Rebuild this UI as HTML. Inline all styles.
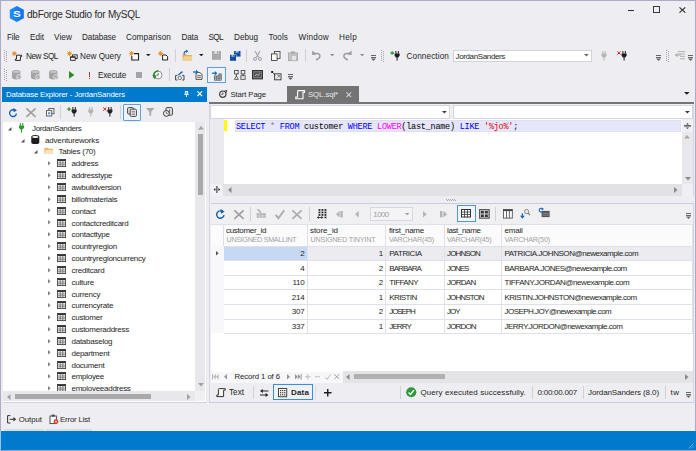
<!DOCTYPE html>
<html><head><meta charset="utf-8"><title>dbForge Studio for MySQL</title>
<style>
html,body{margin:0;padding:0;}
body{width:696px;height:451px;overflow:hidden;background:#eeeef2;font-family:"Liberation Sans",sans-serif;}
#w{position:relative;width:696px;height:451px;overflow:hidden;background:#eeeef2;}
#w div,#w span.t,#w svg{position:absolute;}
span.t{white-space:pre;display:block;}
svg{overflow:visible;}
</style></head><body><div id="w">
<div style="left:0px;top:0px;width:696px;height:1px;background:#ababc8;"></div>
<div style="left:0px;top:0px;width:1px;height:451px;background:#ababc8;"></div>
<div style="left:695px;top:0px;width:1px;height:451px;background:#ababc8;"></div>
<svg style="left:9px;top:5px;" width="15" height="18" viewBox="0 0 15 18"><defs><linearGradient id="lg" x1="0" x2="1" y1="0" y2="0"><stop offset="0" stop-color="#2392f6"/><stop offset="1" stop-color="#0b6df0"/></linearGradient></defs><polygon points="7.8,0.9 14.8,4.8 14.8,13.2 7.8,17.1 0.8,13.2 0.8,4.8" fill="url(#lg)"/><text x="7.8" y="12.4" text-anchor="middle" font-family="Liberation Sans,sans-serif" font-weight="bold" font-size="9.4" fill="#fff" transform="translate(7.8 0) scale(1.25 1) translate(-7.8 0)">S</text></svg>
<span class="t" style="left:27.00px;top:9.10px;font-size:10.0px;line-height:12px;color:#2a2a2a;letter-spacing:-0.248px;">dbForge Studio for MySQL</span>
<div style="left:627.5px;top:9.6px;width:6.5px;height:1.8px;background:#2a2a2a;"></div>
<div style="left:653px;top:6px;width:6.5px;height:6.5px;box-sizing:border-box;border:1px solid #3a3a3a;border-top-width:1.6px;"></div>
<svg style="left:679px;top:6.5px;" width="7" height="6" viewBox="0 0 7 6"><path d="M0.5 0.3 L6.3 5.7 M6.3 0.3 L0.5 5.7" stroke="#2a2a2a" stroke-width="1.1" fill="none"/></svg>
<span class="t" style="left:7.00px;top:32.00px;font-size:8.2px;line-height:12px;color:#1e1e1e;letter-spacing:-0.178px;">File</span>
<span class="t" style="left:30.00px;top:32.00px;font-size:8.2px;line-height:12px;color:#1e1e1e;letter-spacing:-0.032px;">Edit</span>
<span class="t" style="left:54.00px;top:32.00px;font-size:8.2px;line-height:12px;color:#1e1e1e;letter-spacing:0.094px;">View</span>
<span class="t" style="left:82.00px;top:32.00px;font-size:8.2px;line-height:12px;color:#1e1e1e;letter-spacing:-0.138px;">Database</span>
<span class="t" style="left:126.00px;top:32.00px;font-size:8.2px;line-height:12px;color:#1e1e1e;letter-spacing:0.079px;">Comparison</span>
<span class="t" style="left:181.50px;top:32.00px;font-size:8.2px;line-height:12px;color:#1e1e1e;letter-spacing:-0.205px;">Data</span>
<span class="t" style="left:208.50px;top:32.00px;font-size:8.2px;line-height:12px;color:#1e1e1e;letter-spacing:-0.636px;">SQL</span>
<span class="t" style="left:234.00px;top:32.00px;font-size:8.2px;line-height:12px;color:#1e1e1e;letter-spacing:-0.033px;">Debug</span>
<span class="t" style="left:268.50px;top:32.00px;font-size:8.2px;line-height:12px;color:#1e1e1e;letter-spacing:0.071px;">Tools</span>
<span class="t" style="left:298.50px;top:32.00px;font-size:8.2px;line-height:12px;color:#1e1e1e;letter-spacing:0.223px;">Window</span>
<span class="t" style="left:339.00px;top:32.00px;font-size:8.2px;line-height:12px;color:#1e1e1e;letter-spacing:0.284px;">Help</span>
<svg style="left:4px;top:49.5px;" width="4" height="12" viewBox="0 0 4 12"><rect x="0" y="0" width="1" height="1" fill="#a4a4ae"/><rect x="2" y="1" width="1" height="1" fill="#a4a4ae"/><rect x="0" y="2" width="1" height="1" fill="#a4a4ae"/><rect x="2" y="3" width="1" height="1" fill="#a4a4ae"/><rect x="0" y="4" width="1" height="1" fill="#a4a4ae"/><rect x="2" y="5" width="1" height="1" fill="#a4a4ae"/><rect x="0" y="6" width="1" height="1" fill="#a4a4ae"/><rect x="2" y="7" width="1" height="1" fill="#a4a4ae"/><rect x="0" y="8" width="1" height="1" fill="#a4a4ae"/><rect x="2" y="9" width="1" height="1" fill="#a4a4ae"/><rect x="0" y="10" width="1" height="1" fill="#a4a4ae"/><rect x="2" y="11" width="1" height="1" fill="#a4a4ae"/></svg>
<svg style="left:380.5px;top:49.5px;" width="4" height="12" viewBox="0 0 4 12"><rect x="0" y="0" width="1" height="1" fill="#a4a4ae"/><rect x="2" y="1" width="1" height="1" fill="#a4a4ae"/><rect x="0" y="2" width="1" height="1" fill="#a4a4ae"/><rect x="2" y="3" width="1" height="1" fill="#a4a4ae"/><rect x="0" y="4" width="1" height="1" fill="#a4a4ae"/><rect x="2" y="5" width="1" height="1" fill="#a4a4ae"/><rect x="0" y="6" width="1" height="1" fill="#a4a4ae"/><rect x="2" y="7" width="1" height="1" fill="#a4a4ae"/><rect x="0" y="8" width="1" height="1" fill="#a4a4ae"/><rect x="2" y="9" width="1" height="1" fill="#a4a4ae"/><rect x="0" y="10" width="1" height="1" fill="#a4a4ae"/><rect x="2" y="11" width="1" height="1" fill="#a4a4ae"/></svg>
<svg style="left:665.5px;top:49.5px;" width="4" height="12" viewBox="0 0 4 12"><rect x="0" y="0" width="1" height="1" fill="#a4a4ae"/><rect x="2" y="1" width="1" height="1" fill="#a4a4ae"/><rect x="0" y="2" width="1" height="1" fill="#a4a4ae"/><rect x="2" y="3" width="1" height="1" fill="#a4a4ae"/><rect x="0" y="4" width="1" height="1" fill="#a4a4ae"/><rect x="2" y="5" width="1" height="1" fill="#a4a4ae"/><rect x="0" y="6" width="1" height="1" fill="#a4a4ae"/><rect x="2" y="7" width="1" height="1" fill="#a4a4ae"/><rect x="0" y="8" width="1" height="1" fill="#a4a4ae"/><rect x="2" y="9" width="1" height="1" fill="#a4a4ae"/><rect x="0" y="10" width="1" height="1" fill="#a4a4ae"/><rect x="2" y="11" width="1" height="1" fill="#a4a4ae"/></svg>
<span class="t" style="left:26.00px;top:50.70px;font-size:8.2px;line-height:12px;color:#1e1e1e;letter-spacing:-0.441px;">New SQL</span>
<span class="t" style="left:80.00px;top:50.70px;font-size:8.2px;line-height:12px;color:#1e1e1e;">New Query</span>
<span class="t" style="left:406.50px;top:50.70px;font-size:8.2px;line-height:12px;color:#1e1e1e;letter-spacing:0.102px;">Connection</span>
<div style="left:453px;top:49.5px;width:139px;height:12.5px;background:#fff;box-sizing:border-box;border:1px solid #d0d2dc;"></div>
<span class="t" style="left:455.50px;top:50.50px;font-size:8.0px;line-height:12px;color:#1e1e1e;letter-spacing:-0.366px;">JordanSanders</span>
<svg style="left:583.6px;top:54.099999999999994px;" width="4.8" height="2.9" viewBox="0 0 4.8 2.9"><polygon points="0,0 4.8,0 2.4,2.4" fill="#6a6a6a"/></svg>
<svg style="left:146.39999999999998px;top:54.45px;" width="4.6" height="2.8" viewBox="0 0 4.6 2.8"><polygon points="0,0 4.6,0 2.3,2.3" fill="#1e1e1e"/></svg>
<svg style="left:199.39999999999998px;top:54.45px;" width="4.6" height="2.8" viewBox="0 0 4.6 2.8"><polygon points="0,0 4.6,0 2.3,2.3" fill="#1e1e1e"/></svg>
<svg style="left:329.5px;top:54.3px;" width="4.4" height="2.7" viewBox="0 0 4.4 2.7"><polygon points="0,0 4.4,0 2.2,2.2" fill="#8a8a8a"/></svg>
<svg style="left:359.5px;top:54.3px;" width="4.4" height="2.7" viewBox="0 0 4.4 2.7"><polygon points="0,0 4.4,0 2.2,2.2" fill="#8a8a8a"/></svg>
<svg style="left:370.5px;top:55px;" width="5" height="6" viewBox="0 0 5 6"><rect x="0" y="0" width="5" height="1" fill="#666"/><rect x="0" y="2" width="5" height="1" fill="#666"/><polygon points="0,3.5 5,3.5 2.5,6" fill="#666"/></svg>
<svg style="left:656.0px;top:55px;" width="5" height="6" viewBox="0 0 5 6"><rect x="0" y="0" width="5" height="1" fill="#666"/><rect x="0" y="2" width="5" height="1" fill="#666"/><polygon points="0,3.5 5,3.5 2.5,6" fill="#666"/></svg>
<svg style="left:687.5px;top:55px;" width="5" height="6" viewBox="0 0 5 6"><rect x="0" y="0" width="5" height="1" fill="#666"/><rect x="0" y="2" width="5" height="1" fill="#666"/><polygon points="0,3.5 5,3.5 2.5,6" fill="#666"/></svg>
<div style="left:175px;top:49px;width:1px;height:13px;background:#cfd0da;"></div>
<div style="left:246px;top:49px;width:1px;height:13px;background:#cfd0da;"></div>
<div style="left:305px;top:49px;width:1px;height:13px;background:#cfd0da;"></div>
<svg style="left:4px;top:68.5px;" width="4" height="12" viewBox="0 0 4 12"><rect x="0" y="0" width="1" height="1" fill="#a4a4ae"/><rect x="2" y="1" width="1" height="1" fill="#a4a4ae"/><rect x="0" y="2" width="1" height="1" fill="#a4a4ae"/><rect x="2" y="3" width="1" height="1" fill="#a4a4ae"/><rect x="0" y="4" width="1" height="1" fill="#a4a4ae"/><rect x="2" y="5" width="1" height="1" fill="#a4a4ae"/><rect x="0" y="6" width="1" height="1" fill="#a4a4ae"/><rect x="2" y="7" width="1" height="1" fill="#a4a4ae"/><rect x="0" y="8" width="1" height="1" fill="#a4a4ae"/><rect x="2" y="9" width="1" height="1" fill="#a4a4ae"/><rect x="0" y="10" width="1" height="1" fill="#a4a4ae"/><rect x="2" y="11" width="1" height="1" fill="#a4a4ae"/></svg>
<span class="t" style="left:98.00px;top:69.70px;font-size:8.2px;line-height:12px;color:#1e1e1e;letter-spacing:-0.233px;">Execute</span>
<div style="left:169px;top:68px;width:1px;height:13px;background:#cfd0da;"></div>
<svg style="left:287.5px;top:74px;" width="5" height="6" viewBox="0 0 5 6"><rect x="0" y="0" width="5" height="1" fill="#666"/><rect x="0" y="2" width="5" height="1" fill="#666"/><polygon points="0,3.5 5,3.5 2.5,6" fill="#666"/></svg>
<div style="left:207px;top:66.7px;width:18.5px;height:16.3px;background:#edf2f9;box-sizing:border-box;border:1px solid #5c9fe0;"></div>
<svg style="left:12px;top:50.5px;" width="11" height="11" viewBox="0 0 11 11"><path d="M2.3 0.10000000000000009 V5.1 M-0.20000000000000018 2.6 H4.8 M0.4999999999999998 0.8 L4.1 4.4 M4.1 0.8 L0.4999999999999998 4.4" stroke="#e8962e" stroke-width="1"/><circle cx="2.3" cy="2.6" r="1.5" fill="#e8962e"/><path d="M4.6 4.2 H9.6 V5.6 H8.4 V9.4 H3.4 V8 H4.6 Z" fill="#fff" stroke="#222" stroke-width="1"/></svg>
<svg style="left:66.5px;top:50.5px;" width="11" height="11" viewBox="0 0 11 11"><path d="M2.5 0.10000000000000009 V5.1 M0.0 2.6 H5.0 M0.7 0.8 L4.3 4.4 M4.3 0.8 L0.7 4.4" stroke="#e8962e" stroke-width="1"/><circle cx="2.5" cy="2.6" r="1.5" fill="#e8962e"/><rect x="5.6" y="3.9" width="4.6" height="3.6" fill="#f4f4f4" stroke="#222" stroke-width="0.9"/><rect x="3.6" y="5.9" width="4.6" height="3.4" fill="#f4f4f4" stroke="#222" stroke-width="0.9"/><rect x="3.6" y="5.6" width="4.6" height="1" fill="#222"/></svg>
<svg style="left:128.5px;top:50.5px;" width="11" height="11" viewBox="0 0 11 11"><path d="M2.5 0.10000000000000009 V5.1 M0.0 2.6 H5.0 M0.7 0.8 L4.3 4.4 M4.3 0.8 L0.7 4.4" stroke="#e8962e" stroke-width="1"/><circle cx="2.5" cy="2.6" r="1.5" fill="#e8962e"/><path d="M5 2.6 H9.5 V9 H2.8 V5" fill="#fff" stroke="#222" stroke-width="1.1"/></svg>
<svg style="left:158px;top:50.5px;" width="11" height="11" viewBox="0 0 11 11"><path d="M2.7 0.10000000000000009 V5.1 M0.20000000000000018 2.6 H5.2 M0.9000000000000001 0.8 L4.5 4.4 M4.5 0.8 L0.9000000000000001 4.4" stroke="#e8962e" stroke-width="1"/><circle cx="2.7" cy="2.6" r="1.5" fill="#e8962e"/><path d="M4.6 4 H8 L9.6 5.6 V9 H4.6 Z" fill="#fff" stroke="#222" stroke-width="1"/></svg>
<svg style="left:181.5px;top:50px;" width="11" height="11" viewBox="0 0 11 11"><path d="M0.5 4 H4.2 L5 5 H10 V10.4 H0.5 Z" fill="#e2b565"/><path d="M2 6.2 H10.6 L9.4 10.4 H0.6 Z" fill="#f2d191"/><path d="M2.2 4.4 V2.6 a1.6 1.6 0 0 1 1.6 -1.3 H4.6" fill="none" stroke="#1767c0" stroke-width="1.2"/><polygon points="4.2,-0.4 6.4,1.3 4.2,3" fill="#1767c0"/></svg>
<svg style="left:212px;top:51px;" width="9" height="9" viewBox="0 0 9 9"><rect x="0" y="0" width="9" height="8.8" fill="#a9a9a9"/><rect x="2.25" y="0" width="4.5" height="2.9040000000000004" fill="#eeeef2" opacity="0.75"/><rect x="4.95" y="0.3" width="1.2600000000000002" height="2.2" fill="#a9a9a9"/></svg>
<svg style="left:229.5px;top:50.7px;" width="11" height="10" viewBox="0 0 11 10"><rect x="4" y="0" width="6.5" height="5.6" fill="#0f4ea0"/><rect x="5.625" y="0" width="3.25" height="1.8479999999999999" fill="#eeeef2" opacity="0.75"/><rect x="7.575" y="0.3" width="0.9100000000000001" height="1.4" fill="#0f4ea0"/><rect x="-0.4" y="3.4" width="6.8" height="6.8" fill="#eeeef2"/><rect x="0" y="3.8" width="6" height="6" fill="#0f4ea0"/><rect x="1.5" y="3.8" width="3.0" height="1.98" fill="#eeeef2" opacity="0.75"/><rect x="3.3000000000000003" y="4.1" width="0.8400000000000001" height="1.5" fill="#0f4ea0"/></svg>
<svg style="left:253px;top:50.7px;" width="9" height="10" viewBox="0 0 9 10"><path d="M2 0 L5.8 6.6 M7 0 L3.2 6.6" stroke="#a4a4a4" stroke-width="1.1" fill="none"/><circle cx="2" cy="8" r="1.5" fill="none" stroke="#a4a4a4" stroke-width="1"/><circle cx="7" cy="8" r="1.5" fill="none" stroke="#a4a4a4" stroke-width="1"/></svg>
<svg style="left:270.8px;top:50.7px;" width="10" height="10" viewBox="0 0 10 10"><rect x="3.4" y="0.5" width="5.6" height="7" fill="#fafafa" stroke="#444" stroke-width="0.9"/><rect x="0.5" y="2.9" width="5.6" height="6.6" fill="#fafafa" stroke="#444" stroke-width="0.9"/></svg>
<svg style="left:288px;top:50.7px;" width="10" height="10" viewBox="0 0 10 10"><rect x="0.6" y="2" width="8.8" height="7.6" fill="#c6c6c6" stroke="#a9a9a9" stroke-width="1"/><rect x="3" y="0.4" width="4" height="2.4" fill="#a9a9a9"/><rect x="3.4" y="4.4" width="5" height="5.2" fill="#e4e4e6" stroke="#b4b4b4" stroke-width="0.7"/></svg>
<svg style="left:312px;top:50.4px;" width="10" height="10" viewBox="0 0 10 10"><path d="M1.4 3.6 H5.4 a2.6 2.6 0 0 1 1.6 4.6 L4 10" fill="none" stroke="#9c9c9c" stroke-width="1.5"/><polygon points="0.2,0.4 0.2,5 4.6,4.6" fill="#9c9c9c"/></svg>
<svg style="left:342px;top:50.4px;" width="10" height="10" viewBox="0 0 10 10"><path d="M8.4 3.6 H4.4 a2.6 2.6 0 0 0 -1.6 4.6 L5.8 10" fill="none" stroke="#9c9c9c" stroke-width="1.5"/><polygon points="9.6,0.4 9.6,5 5.2,4.6" fill="#9c9c9c"/></svg>
<svg style="left:389.5px;top:51px;" width="11" height="10" viewBox="0 0 11 10"><path d="M2.2 0.2 V3.8000000000000003 M0.4 2.0 H4.0" stroke="#2e9a2e" stroke-width="1.3"/><rect x="5.3999999999999995" y="0" width="1" height="2.8" fill="#1e1e1e"/><rect x="7.8" y="0" width="1" height="2.8" fill="#1e1e1e"/><path d="M4.6 2.6 H9.6 V4.8 L8.2 6.4 H6.0 L4.6 4.8 Z" fill="#1e1e1e"/><rect x="6.6" y="6" width="1" height="3.6" fill="#1e1e1e"/></svg>
<svg style="left:601px;top:50.5px;" width="7" height="10" viewBox="0 0 7 10"><rect x="1.3" y="0" width="1" height="2.8" fill="#b4b4b4"/><rect x="3.7" y="0" width="1" height="2.8" fill="#b4b4b4"/><path d="M0.5 2.6 H5.5 V4.8 L4.1 6.4 H1.9 L0.5 4.8 Z" fill="#b4b4b4"/><rect x="2.5" y="6" width="1" height="3.6" fill="#b4b4b4"/></svg>
<svg style="left:616.5px;top:50.5px;" width="11" height="10" viewBox="0 0 11 10"><path d="M0.3 0.4 L3.5 3.6 M3.5 0.4 L0.3 3.6" stroke="#d02020" stroke-width="1.0"/><rect x="5.3999999999999995" y="0" width="1" height="2.8" fill="#1e1e1e"/><rect x="7.8" y="0" width="1" height="2.8" fill="#1e1e1e"/><path d="M4.6 2.6 H9.6 V4.8 L8.2 6.4 H6.0 L4.6 4.8 Z" fill="#1e1e1e"/><rect x="6.6" y="6" width="1" height="3.6" fill="#1e1e1e"/></svg>
<svg style="left:675px;top:50.8px;" width="10" height="9" viewBox="0 0 10 9"><path d="M3 0.6 H10 M3 3 H10 M5 5.4 H10 M5 7.8 H10" stroke="#b0b0b0" stroke-width="1"/><path d="M0.3 4 H6" stroke="#b0b0b0" stroke-width="1"/><polygon points="0,4 2.6,1.8 2.6,6.2" fill="#b0b0b0"/></svg>
<svg style="left:12px;top:70.3px;" width="10" height="10" viewBox="0 0 10 10"><path d="M0 1.8 a4.2 1.8 0 0 1 8.4 0 V7.6 a4.2 1.8 0 0 1 -8.4 0 Z" fill="#a4a4a4"/><ellipse cx="4.2" cy="1.9" rx="3.4" ry="1.1" fill="#c4c4c4"/><circle cx="7" cy="7" r="2.4" fill="#a4a4a4" stroke="#eeeef2" stroke-width="0.8"/><path d="M5.9 7 L6.8 7.9 L8.2 6.2" stroke="#e6e6e6" stroke-width="0.7" fill="none"/></svg>
<svg style="left:30.5px;top:70.3px;" width="10" height="10" viewBox="0 0 10 10"><path d="M0 1.8 a4.2 1.8 0 0 1 8.4 0 V7.6 a4.2 1.8 0 0 1 -8.4 0 Z" fill="#a4a4a4"/><ellipse cx="4.2" cy="1.9" rx="3.4" ry="1.1" fill="#c4c4c4"/><circle cx="7" cy="7" r="2.4" fill="#a4a4a4" stroke="#eeeef2" stroke-width="0.8"/><path d="M5.9 7 L6.8 7.9 L8.2 6.2" stroke="#e6e6e6" stroke-width="0.7" fill="none"/></svg>
<svg style="left:48.5px;top:70.3px;" width="10" height="10" viewBox="0 0 10 10"><path d="M0 1.8 a4.2 1.8 0 0 1 8.4 0 V7.6 a4.2 1.8 0 0 1 -8.4 0 Z" fill="#a4a4a4"/><ellipse cx="4.2" cy="1.9" rx="3.4" ry="1.1" fill="#c4c4c4"/><circle cx="7" cy="7" r="2.4" fill="#a4a4a4" stroke="#eeeef2" stroke-width="0.8"/><path d="M5.9 7 L6.8 7.9 L8.2 6.2" stroke="#e6e6e6" stroke-width="0.7" fill="none"/></svg>
<svg style="left:69px;top:71.3px;" width="5.5" height="8" viewBox="0 0 5.5 8"><polygon points="0,0 5.4,3.9 0,7.8" fill="#2b8a2b"/></svg>
<div style="left:88.5px;top:71.6px;width:1.6px;height:5px;background:#c0392b;"></div>
<div style="left:88.5px;top:77.5px;width:1.6px;height:1.5px;background:#c0392b;"></div>
<div style="left:136px;top:72.3px;width:6px;height:6px;background:#a4a4a4;"></div>
<svg style="left:151.5px;top:70.3px;" width="11" height="10" viewBox="0 0 11 10"><circle cx="6" cy="5" r="4" fill="#f6f6f6" stroke="#8a8a8a" stroke-width="0.9"/><path d="M6.4 1 A4 4 0 0 0 3 7.8" fill="none" stroke="#2b8a2b" stroke-width="1.5"/><polygon points="0.2,5.2 4.6,5.6 2.6,9.2" fill="#2b8a2b"/><path d="M6.2 2.8 V5.2 H4.4" stroke="#555" stroke-width="0.8" fill="none"/></svg>
<svg style="left:175px;top:70.5px;" width="10" height="10" viewBox="0 0 10 10"><path d="M2.4 4.4 H0.6 V9 H2.4 M7.2 4.4 H9 V9 H7.2" fill="none" stroke="#444" stroke-width="1"/><circle cx="4.8" cy="6.9" r="1.7" fill="none" stroke="#555" stroke-width="0.8"/><path d="M3.4 4 L7.4 0.6" stroke="#1767c0" stroke-width="1.4"/></svg>
<svg style="left:192.8px;top:70.3px;" width="10" height="10" viewBox="0 0 10 10"><path d="M3 2.6 H7 L9 4.4 V9.4 H3 Z" fill="#f4f4f4" stroke="#444" stroke-width="0.9"/><path d="M4.2 5.6 H7.8 M4.2 7.4 H7.8" stroke="#444" stroke-width="0.8"/><path d="M0 2 H3.6" stroke="#1767c0" stroke-width="1.3"/><polygon points="3,-0.2 5.6,2 3,4.2" fill="#1767c0"/></svg>
<svg style="left:211.8px;top:70.6px;" width="10" height="10" viewBox="0 0 10 10"><path d="M2.6 4.8 V9.2 M4.8 4.8 V9.2 M7 2.8 V9.2 M9.2 2.8 V9.2 M2.2 5 H9.4 M2.2 7.1 H9.4 M2.2 9.2 H9.4 M6.8 3 H9.4" stroke="#4a4a4a" stroke-width="0.8" fill="none"/><path d="M0 2.2 H3.4" stroke="#1767c0" stroke-width="1.3"/><polygon points="2.8,0 5.4,2.2 2.8,4.4" fill="#1767c0"/></svg>
<svg style="left:233.5px;top:70.3px;" width="12" height="10" viewBox="0 0 12 10"><rect x="0.6" y="0.5" width="3.6" height="3.4" fill="#f4f4f4" stroke="#444" stroke-width="0.9"/><rect x="7.2" y="0.5" width="3.6" height="3.4" fill="#f4f4f4" stroke="#444" stroke-width="0.9"/><path d="M2.4 4 V6 M9 4 V6" stroke="#444" stroke-width="0.9"/><polygon points="0.4,9.4 2.4,6 4.4,9.4" fill="#f4f4f4" stroke="#444" stroke-width="0.8"/><rect x="6.8" y="5.6" width="4.4" height="3.9" fill="#d8d8d8" stroke="#555" stroke-width="0.8"/></svg>
<svg style="left:252px;top:70.4px;" width="11" height="10" viewBox="0 0 11 10"><rect x="0.6" y="0.6" width="9.8" height="8.2" fill="#888" stroke="#333" stroke-width="1.2"/><rect x="2" y="2.2" width="7" height="5" fill="#555"/><path d="M3 6 L4.6 4.2 L6 5.6 L7.6 3.4" stroke="#e8e8e8" stroke-width="0.7" fill="none"/></svg>
<svg style="left:270.5px;top:71px;" width="11" height="10" viewBox="0 0 11 10"><rect x="3.6" y="2.8" width="6.4" height="6" fill="#f0f0f0" stroke="#444" stroke-width="1"/><rect x="0.2" y="0" width="2" height="2" fill="#222"/><path d="M1.6 1.6 L4.4 4.2" stroke="#222" stroke-width="0.7"/><path d="M5.4 7.4 L8.4 4.4 M6.4 4.4 H8.4 V6.4" stroke="#666" stroke-width="0.7" fill="none"/></svg>
<div style="left:2px;top:86.5px;width:205px;height:316px;background:#eaeaee;"></div>
<div style="left:2px;top:86.7px;width:204.7px;height:15px;background:#007acc;"></div>
<span class="t" style="left:6.00px;top:88.90px;font-size:7.8px;line-height:12px;color:#fff;letter-spacing:-0.165px;">Database Explorer - JordanSanders</span>
<svg style="left:184px;top:91px;" width="5" height="6" viewBox="0 0 5 6"><path d="M1 0.5 H4 M1.3 0.5 V3.2 M3.7 0.5 V3.2 M3 0.5 V3.2 M0.3 3.4 H4.7 M2.5 3.5 V6" stroke="#fff" stroke-width="0.9" fill="none"/></svg>
<svg style="left:197px;top:91px;" width="5.5" height="5.5" viewBox="0 0 5.5 5.5"><path d="M0.4 0.4 L5.1 5.1 M5.1 0.4 L0.4 5.1" stroke="#fff" stroke-width="1.2" fill="none"/></svg>
<div style="left:2.5px;top:101.7px;width:204.2px;height:20.3px;background:#eeeef2;"></div>
<div style="left:60px;top:105px;width:1px;height:14px;background:#cfd0da;"></div>
<div style="left:119.5px;top:105px;width:1px;height:14px;background:#cfd0da;"></div>
<div style="left:122.5px;top:103.5px;width:18.5px;height:17px;background:#edf2f9;box-sizing:border-box;border:1px solid #5c9fe0;border-radius:1px;"></div>
<svg style="left:9.2px;top:108px;" width="9" height="10" viewBox="0 0 9 10"><g transform="translate(0 0) scale(1.0)"><path d="M6.6 2.9 A3.4 3.4 0 1 0 7.4 5.6" fill="none" stroke="#1560b0" stroke-width="1.35"/><polygon points="4.3,0 8,2.2 4.6,4.3" fill="#1560b0"/></g></svg>
<svg style="left:26.3px;top:108.2px;" width="10" height="9" viewBox="0 0 10 9"><path d="M0.4 0.4 L9.6 8.8 M9.6 0.4 L0.4 8.8" stroke="#a0a0a0" stroke-width="1.7" fill="none"/></svg>
<svg style="left:45.8px;top:107.8px;" width="9" height="9" viewBox="0 0 9 9"><rect x="2.8" y="0.5" width="5.2" height="5.2" fill="#eeeef2" stroke="#555" stroke-width="0.9"/><rect x="0.5" y="2.6" width="5.2" height="5.4" fill="#fafafa" stroke="#555" stroke-width="0.9"/><rect x="2" y="4.2" width="2.2" height="2.2" fill="#5b9bd5"/></svg>
<svg style="left:67px;top:107.3px;" width="11" height="10" viewBox="0 0 11 10"><path d="M2.0 0.3 V3.9 M0.2 2.1 H3.8000000000000003" stroke="#2e9a2e" stroke-width="1.3"/><rect x="5.3999999999999995" y="0" width="1" height="2.8" fill="#1e1e1e"/><rect x="7.8" y="0" width="1" height="2.8" fill="#1e1e1e"/><path d="M4.6 2.6 H9.6 V4.8 L8.2 6.4 H6.0 L4.6 4.8 Z" fill="#1e1e1e"/><rect x="6.6" y="6" width="1" height="3.6" fill="#1e1e1e"/></svg>
<svg style="left:87.5px;top:107.2px;" width="7" height="10" viewBox="0 0 7 10"><rect x="1.1" y="0" width="1" height="2.8" fill="#b4b4b4"/><rect x="3.5" y="0" width="1" height="2.8" fill="#b4b4b4"/><path d="M0.3 2.6 H5.3 V4.8 L3.9 6.4 H1.7 L0.3 4.8 Z" fill="#b4b4b4"/><rect x="2.3" y="6" width="1" height="3.6" fill="#b4b4b4"/></svg>
<svg style="left:103.3px;top:107.2px;" width="11" height="10" viewBox="0 0 11 10"><path d="M0.2 0.5 L3.4000000000000004 3.7 M3.4000000000000004 0.5 L0.2 3.7" stroke="#d02020" stroke-width="1.0"/><rect x="5.2" y="0" width="1" height="2.8" fill="#1e1e1e"/><rect x="7.6000000000000005" y="0" width="1" height="2.8" fill="#1e1e1e"/><path d="M4.4 2.6 H9.4 V4.8 L8.0 6.4 H5.800000000000001 L4.4 4.8 Z" fill="#1e1e1e"/><rect x="6.4" y="6" width="1" height="3.6" fill="#1e1e1e"/></svg>
<svg style="left:126.5px;top:107px;" width="11" height="10" viewBox="0 0 11 10"><rect x="0.6" y="0.6" width="6" height="6.4" rx="1" fill="#e0e0e0" stroke="#444" stroke-width="1"/><rect x="3.2" y="2.2" width="6.2" height="7.2" rx="1" fill="#f4f4f4" stroke="#444" stroke-width="1"/><path d="M4.6 4.4 H8 M4.6 6 H8 M4.6 7.6 H8" stroke="#555" stroke-width="0.7"/></svg>
<svg style="left:145.5px;top:108.2px;" width="9" height="8" viewBox="0 0 9 8"><polygon points="0,0 8.6,0 5.2,3.8 5.2,7.8 3.4,7.8 3.4,3.8" fill="#a9a9a9"/></svg>
<svg style="left:163px;top:107.2px;" width="11" height="10" viewBox="0 0 11 10"><rect x="3" y="0.6" width="6.4" height="7.6" rx="1" fill="#e8e8e8" stroke="#444" stroke-width="1"/><path d="M6.6 2.4 V6.6" stroke="#444" stroke-width="0.8"/><circle cx="3.4" cy="6.4" r="2.9" fill="#f4f4f4" stroke="#333" stroke-width="1"/><path d="M3.4 4.8 V6.6 H4.8" stroke="#333" stroke-width="0.7" fill="none"/></svg>
<div style="left:2.5px;top:122px;width:203px;height:280.5px;background:#fff;"></div>
<div style="left:195px;top:122px;width:10.3px;height:269px;background:#e8e8ec;"></div>
<div style="left:197.5px;top:133.5px;width:5.5px;height:61.5px;background:#a9a9a9;"></div>
<svg style="left:197.5px;top:125.5px;" width="6" height="3.5" viewBox="0 0 6 3.5"><polygon points="0,3.5 6,3.5 3,0" fill="#a0a0a0"/></svg>
<svg style="left:197.5px;top:383px;" width="6" height="3.5" viewBox="0 0 6 3.5"><polygon points="0,0 6,0 3,3.5" fill="#a0a0a0"/></svg>
<div style="left:2.5px;top:391.3px;width:192.5px;height:10.2px;background:#e8e8ec;"></div>
<div style="left:195px;top:391.3px;width:10.3px;height:10.2px;background:#f0f0f3;"></div>
<div style="left:15px;top:394px;width:136px;height:5px;background:#a9a9a9;"></div>
<svg style="left:6.5px;top:393.5px;" width="3.5" height="6" viewBox="0 0 3.5 6"><polygon points="3.5,0 3.5,6 0,3" fill="#a0a0a0"/></svg>
<svg style="left:186.5px;top:393.5px;" width="3.5" height="6" viewBox="0 0 3.5 6"><polygon points="0,0 0,6 3.5,3" fill="#a0a0a0"/></svg>
<div style="left:2.5px;top:122px;width:192.5px;height:269.3px;overflow:hidden;"><div style="left:-2.5px;top:-122px;width:200px;height:400px;">
<svg style="left:7.7px;top:126.70000000000002px;" width="3.5" height="3.5" viewBox="0 0 3.5 3.5"><polygon points="3.5,0 3.5,3.5 0,3.5" fill="#505050"/></svg>
<span class="t" style="left:32.00px;top:122.80px;font-size:8.0px;line-height:12px;color:#1e1e1e;letter-spacing:-0.366px;">JordanSanders</span>
<svg style="left:20.7px;top:138.54px;" width="3.5" height="3.5" viewBox="0 0 3.5 3.5"><polygon points="3.5,0 3.5,3.5 0,3.5" fill="#505050"/></svg>
<span class="t" style="left:45.00px;top:134.64px;font-size:8.0px;line-height:12px;color:#1e1e1e;letter-spacing:-0.177px;">adventureworks</span>
<svg style="left:33.7px;top:150.38px;" width="3.5" height="3.5" viewBox="0 0 3.5 3.5"><polygon points="3.5,0 3.5,3.5 0,3.5" fill="#505050"/></svg>
<span class="t" style="left:58.50px;top:146.48px;font-size:8.0px;line-height:12px;color:#1e1e1e;letter-spacing:-0.234px;">Tables (70)</span>
<svg style="left:47.5px;top:161.01999999999998px;" width="2.7" height="4.6" viewBox="0 0 2.7 4.6"><polygon points="0,0 2.7,2.3 0,4.6" fill="#858585"/></svg>
<svg style="left:57.3px;top:159.32px;" width="9" height="8" viewBox="0 0 9 8"><rect x="0.4" y="0.4" width="8.2" height="7.2" fill="#fff" stroke="#333" stroke-width="0.8"/><rect x="0.4" y="0.4" width="8.2" height="1.7" fill="#333"/><path d="M0.5 4 H8.5 M0.5 5.8 H8.5 M3.2 2 V7.5 M5.8 2 V7.5" stroke="#4a4a4a" stroke-width="0.65" fill="none"/></svg>
<span class="t" style="left:71.50px;top:158.32px;font-size:8.0px;line-height:12px;color:#1e1e1e;letter-spacing:-0.261px;">address</span>
<svg style="left:47.5px;top:172.85999999999999px;" width="2.7" height="4.6" viewBox="0 0 2.7 4.6"><polygon points="0,0 2.7,2.3 0,4.6" fill="#858585"/></svg>
<svg style="left:57.3px;top:171.16px;" width="9" height="8" viewBox="0 0 9 8"><rect x="0.4" y="0.4" width="8.2" height="7.2" fill="#fff" stroke="#333" stroke-width="0.8"/><rect x="0.4" y="0.4" width="8.2" height="1.7" fill="#333"/><path d="M0.5 4 H8.5 M0.5 5.8 H8.5 M3.2 2 V7.5 M5.8 2 V7.5" stroke="#4a4a4a" stroke-width="0.65" fill="none"/></svg>
<span class="t" style="left:71.50px;top:170.16px;font-size:8.0px;line-height:12px;color:#1e1e1e;letter-spacing:-0.255px;">addresstype</span>
<svg style="left:47.5px;top:184.7px;" width="2.7" height="4.6" viewBox="0 0 2.7 4.6"><polygon points="0,0 2.7,2.3 0,4.6" fill="#858585"/></svg>
<svg style="left:57.3px;top:183.0px;" width="9" height="8" viewBox="0 0 9 8"><rect x="0.4" y="0.4" width="8.2" height="7.2" fill="#fff" stroke="#333" stroke-width="0.8"/><rect x="0.4" y="0.4" width="8.2" height="1.7" fill="#333"/><path d="M0.5 4 H8.5 M0.5 5.8 H8.5 M3.2 2 V7.5 M5.8 2 V7.5" stroke="#4a4a4a" stroke-width="0.65" fill="none"/></svg>
<span class="t" style="left:71.50px;top:182.00px;font-size:8.0px;line-height:12px;color:#1e1e1e;letter-spacing:-0.243px;">awbuildversion</span>
<svg style="left:47.5px;top:196.53999999999996px;" width="2.7" height="4.6" viewBox="0 0 2.7 4.6"><polygon points="0,0 2.7,2.3 0,4.6" fill="#858585"/></svg>
<svg style="left:57.3px;top:194.83999999999997px;" width="9" height="8" viewBox="0 0 9 8"><rect x="0.4" y="0.4" width="8.2" height="7.2" fill="#fff" stroke="#333" stroke-width="0.8"/><rect x="0.4" y="0.4" width="8.2" height="1.7" fill="#333"/><path d="M0.5 4 H8.5 M0.5 5.8 H8.5 M3.2 2 V7.5 M5.8 2 V7.5" stroke="#4a4a4a" stroke-width="0.65" fill="none"/></svg>
<span class="t" style="left:71.50px;top:193.84px;font-size:8.0px;line-height:12px;color:#1e1e1e;letter-spacing:-0.209px;">billofmaterials</span>
<svg style="left:47.5px;top:208.38px;" width="2.7" height="4.6" viewBox="0 0 2.7 4.6"><polygon points="0,0 2.7,2.3 0,4.6" fill="#858585"/></svg>
<svg style="left:57.3px;top:206.68px;" width="9" height="8" viewBox="0 0 9 8"><rect x="0.4" y="0.4" width="8.2" height="7.2" fill="#fff" stroke="#333" stroke-width="0.8"/><rect x="0.4" y="0.4" width="8.2" height="1.7" fill="#333"/><path d="M0.5 4 H8.5 M0.5 5.8 H8.5 M3.2 2 V7.5 M5.8 2 V7.5" stroke="#4a4a4a" stroke-width="0.65" fill="none"/></svg>
<span class="t" style="left:71.50px;top:205.68px;font-size:8.0px;line-height:12px;color:#1e1e1e;letter-spacing:-0.237px;">contact</span>
<svg style="left:47.5px;top:220.21999999999997px;" width="2.7" height="4.6" viewBox="0 0 2.7 4.6"><polygon points="0,0 2.7,2.3 0,4.6" fill="#858585"/></svg>
<svg style="left:57.3px;top:218.51999999999998px;" width="9" height="8" viewBox="0 0 9 8"><rect x="0.4" y="0.4" width="8.2" height="7.2" fill="#fff" stroke="#333" stroke-width="0.8"/><rect x="0.4" y="0.4" width="8.2" height="1.7" fill="#333"/><path d="M0.5 4 H8.5 M0.5 5.8 H8.5 M3.2 2 V7.5 M5.8 2 V7.5" stroke="#4a4a4a" stroke-width="0.65" fill="none"/></svg>
<span class="t" style="left:71.50px;top:217.52px;font-size:8.0px;line-height:12px;color:#1e1e1e;letter-spacing:-0.230px;">contactcreditcard</span>
<svg style="left:47.5px;top:232.06px;" width="2.7" height="4.6" viewBox="0 0 2.7 4.6"><polygon points="0,0 2.7,2.3 0,4.6" fill="#858585"/></svg>
<svg style="left:57.3px;top:230.36px;" width="9" height="8" viewBox="0 0 9 8"><rect x="0.4" y="0.4" width="8.2" height="7.2" fill="#fff" stroke="#333" stroke-width="0.8"/><rect x="0.4" y="0.4" width="8.2" height="1.7" fill="#333"/><path d="M0.5 4 H8.5 M0.5 5.8 H8.5 M3.2 2 V7.5 M5.8 2 V7.5" stroke="#4a4a4a" stroke-width="0.65" fill="none"/></svg>
<span class="t" style="left:71.50px;top:229.36px;font-size:8.0px;line-height:12px;color:#1e1e1e;letter-spacing:-0.239px;">contacttype</span>
<svg style="left:47.5px;top:243.89999999999998px;" width="2.7" height="4.6" viewBox="0 0 2.7 4.6"><polygon points="0,0 2.7,2.3 0,4.6" fill="#858585"/></svg>
<svg style="left:57.3px;top:242.2px;" width="9" height="8" viewBox="0 0 9 8"><rect x="0.4" y="0.4" width="8.2" height="7.2" fill="#fff" stroke="#333" stroke-width="0.8"/><rect x="0.4" y="0.4" width="8.2" height="1.7" fill="#333"/><path d="M0.5 4 H8.5 M0.5 5.8 H8.5 M3.2 2 V7.5 M5.8 2 V7.5" stroke="#4a4a4a" stroke-width="0.65" fill="none"/></svg>
<span class="t" style="left:71.50px;top:241.20px;font-size:8.0px;line-height:12px;color:#1e1e1e;letter-spacing:-0.240px;">countryregion</span>
<svg style="left:47.5px;top:255.74px;" width="2.7" height="4.6" viewBox="0 0 2.7 4.6"><polygon points="0,0 2.7,2.3 0,4.6" fill="#858585"/></svg>
<svg style="left:57.3px;top:254.04000000000002px;" width="9" height="8" viewBox="0 0 9 8"><rect x="0.4" y="0.4" width="8.2" height="7.2" fill="#fff" stroke="#333" stroke-width="0.8"/><rect x="0.4" y="0.4" width="8.2" height="1.7" fill="#333"/><path d="M0.5 4 H8.5 M0.5 5.8 H8.5 M3.2 2 V7.5 M5.8 2 V7.5" stroke="#4a4a4a" stroke-width="0.65" fill="none"/></svg>
<span class="t" style="left:71.50px;top:253.04px;font-size:8.0px;line-height:12px;color:#1e1e1e;letter-spacing:-0.242px;">countryregioncurrency</span>
<svg style="left:47.5px;top:267.58px;" width="2.7" height="4.6" viewBox="0 0 2.7 4.6"><polygon points="0,0 2.7,2.3 0,4.6" fill="#858585"/></svg>
<svg style="left:57.3px;top:265.88px;" width="9" height="8" viewBox="0 0 9 8"><rect x="0.4" y="0.4" width="8.2" height="7.2" fill="#fff" stroke="#333" stroke-width="0.8"/><rect x="0.4" y="0.4" width="8.2" height="1.7" fill="#333"/><path d="M0.5 4 H8.5 M0.5 5.8 H8.5 M3.2 2 V7.5 M5.8 2 V7.5" stroke="#4a4a4a" stroke-width="0.65" fill="none"/></svg>
<span class="t" style="left:71.50px;top:264.88px;font-size:8.0px;line-height:12px;color:#1e1e1e;letter-spacing:-0.226px;">creditcard</span>
<svg style="left:47.5px;top:279.41999999999996px;" width="2.7" height="4.6" viewBox="0 0 2.7 4.6"><polygon points="0,0 2.7,2.3 0,4.6" fill="#858585"/></svg>
<svg style="left:57.3px;top:277.71999999999997px;" width="9" height="8" viewBox="0 0 9 8"><rect x="0.4" y="0.4" width="8.2" height="7.2" fill="#fff" stroke="#333" stroke-width="0.8"/><rect x="0.4" y="0.4" width="8.2" height="1.7" fill="#333"/><path d="M0.5 4 H8.5 M0.5 5.8 H8.5 M3.2 2 V7.5 M5.8 2 V7.5" stroke="#4a4a4a" stroke-width="0.65" fill="none"/></svg>
<span class="t" style="left:71.50px;top:276.72px;font-size:8.0px;line-height:12px;color:#1e1e1e;letter-spacing:-0.220px;">culture</span>
<svg style="left:47.5px;top:291.26px;" width="2.7" height="4.6" viewBox="0 0 2.7 4.6"><polygon points="0,0 2.7,2.3 0,4.6" fill="#858585"/></svg>
<svg style="left:57.3px;top:289.56px;" width="9" height="8" viewBox="0 0 9 8"><rect x="0.4" y="0.4" width="8.2" height="7.2" fill="#fff" stroke="#333" stroke-width="0.8"/><rect x="0.4" y="0.4" width="8.2" height="1.7" fill="#333"/><path d="M0.5 4 H8.5 M0.5 5.8 H8.5 M3.2 2 V7.5 M5.8 2 V7.5" stroke="#4a4a4a" stroke-width="0.65" fill="none"/></svg>
<span class="t" style="left:71.50px;top:288.56px;font-size:8.0px;line-height:12px;color:#1e1e1e;letter-spacing:-0.246px;">currency</span>
<svg style="left:47.5px;top:303.09999999999997px;" width="2.7" height="4.6" viewBox="0 0 2.7 4.6"><polygon points="0,0 2.7,2.3 0,4.6" fill="#858585"/></svg>
<svg style="left:57.3px;top:301.4px;" width="9" height="8" viewBox="0 0 9 8"><rect x="0.4" y="0.4" width="8.2" height="7.2" fill="#fff" stroke="#333" stroke-width="0.8"/><rect x="0.4" y="0.4" width="8.2" height="1.7" fill="#333"/><path d="M0.5 4 H8.5 M0.5 5.8 H8.5 M3.2 2 V7.5 M5.8 2 V7.5" stroke="#4a4a4a" stroke-width="0.65" fill="none"/></svg>
<span class="t" style="left:71.50px;top:300.40px;font-size:8.0px;line-height:12px;color:#1e1e1e;letter-spacing:-0.238px;">currencyrate</span>
<svg style="left:47.5px;top:314.94px;" width="2.7" height="4.6" viewBox="0 0 2.7 4.6"><polygon points="0,0 2.7,2.3 0,4.6" fill="#858585"/></svg>
<svg style="left:57.3px;top:313.24px;" width="9" height="8" viewBox="0 0 9 8"><rect x="0.4" y="0.4" width="8.2" height="7.2" fill="#fff" stroke="#333" stroke-width="0.8"/><rect x="0.4" y="0.4" width="8.2" height="1.7" fill="#333"/><path d="M0.5 4 H8.5 M0.5 5.8 H8.5 M3.2 2 V7.5 M5.8 2 V7.5" stroke="#4a4a4a" stroke-width="0.65" fill="none"/></svg>
<span class="t" style="left:71.50px;top:312.24px;font-size:8.0px;line-height:12px;color:#1e1e1e;letter-spacing:-0.264px;">customer</span>
<svg style="left:47.5px;top:326.78px;" width="2.7" height="4.6" viewBox="0 0 2.7 4.6"><polygon points="0,0 2.7,2.3 0,4.6" fill="#858585"/></svg>
<svg style="left:57.3px;top:325.08px;" width="9" height="8" viewBox="0 0 9 8"><rect x="0.4" y="0.4" width="8.2" height="7.2" fill="#fff" stroke="#333" stroke-width="0.8"/><rect x="0.4" y="0.4" width="8.2" height="1.7" fill="#333"/><path d="M0.5 4 H8.5 M0.5 5.8 H8.5 M3.2 2 V7.5 M5.8 2 V7.5" stroke="#4a4a4a" stroke-width="0.65" fill="none"/></svg>
<span class="t" style="left:71.50px;top:324.08px;font-size:8.0px;line-height:12px;color:#1e1e1e;letter-spacing:-0.263px;">customeraddress</span>
<svg style="left:47.5px;top:338.62px;" width="2.7" height="4.6" viewBox="0 0 2.7 4.6"><polygon points="0,0 2.7,2.3 0,4.6" fill="#858585"/></svg>
<svg style="left:57.3px;top:336.92px;" width="9" height="8" viewBox="0 0 9 8"><rect x="0.4" y="0.4" width="8.2" height="7.2" fill="#fff" stroke="#333" stroke-width="0.8"/><rect x="0.4" y="0.4" width="8.2" height="1.7" fill="#333"/><path d="M0.5 4 H8.5 M0.5 5.8 H8.5 M3.2 2 V7.5 M5.8 2 V7.5" stroke="#4a4a4a" stroke-width="0.65" fill="none"/></svg>
<span class="t" style="left:71.50px;top:335.92px;font-size:8.0px;line-height:12px;color:#1e1e1e;letter-spacing:-0.255px;">databaselog</span>
<svg style="left:47.5px;top:350.46px;" width="2.7" height="4.6" viewBox="0 0 2.7 4.6"><polygon points="0,0 2.7,2.3 0,4.6" fill="#858585"/></svg>
<svg style="left:57.3px;top:348.76px;" width="9" height="8" viewBox="0 0 9 8"><rect x="0.4" y="0.4" width="8.2" height="7.2" fill="#fff" stroke="#333" stroke-width="0.8"/><rect x="0.4" y="0.4" width="8.2" height="1.7" fill="#333"/><path d="M0.5 4 H8.5 M0.5 5.8 H8.5 M3.2 2 V7.5 M5.8 2 V7.5" stroke="#4a4a4a" stroke-width="0.65" fill="none"/></svg>
<span class="t" style="left:71.50px;top:347.76px;font-size:8.0px;line-height:12px;color:#1e1e1e;letter-spacing:-0.260px;">department</span>
<svg style="left:47.5px;top:362.3px;" width="2.7" height="4.6" viewBox="0 0 2.7 4.6"><polygon points="0,0 2.7,2.3 0,4.6" fill="#858585"/></svg>
<svg style="left:57.3px;top:360.6px;" width="9" height="8" viewBox="0 0 9 8"><rect x="0.4" y="0.4" width="8.2" height="7.2" fill="#fff" stroke="#333" stroke-width="0.8"/><rect x="0.4" y="0.4" width="8.2" height="1.7" fill="#333"/><path d="M0.5 4 H8.5 M0.5 5.8 H8.5 M3.2 2 V7.5 M5.8 2 V7.5" stroke="#4a4a4a" stroke-width="0.65" fill="none"/></svg>
<span class="t" style="left:71.50px;top:359.60px;font-size:8.0px;line-height:12px;color:#1e1e1e;letter-spacing:-0.282px;">document</span>
<svg style="left:47.5px;top:374.14px;" width="2.7" height="4.6" viewBox="0 0 2.7 4.6"><polygon points="0,0 2.7,2.3 0,4.6" fill="#858585"/></svg>
<svg style="left:57.3px;top:372.44px;" width="9" height="8" viewBox="0 0 9 8"><rect x="0.4" y="0.4" width="8.2" height="7.2" fill="#fff" stroke="#333" stroke-width="0.8"/><rect x="0.4" y="0.4" width="8.2" height="1.7" fill="#333"/><path d="M0.5 4 H8.5 M0.5 5.8 H8.5 M3.2 2 V7.5 M5.8 2 V7.5" stroke="#4a4a4a" stroke-width="0.65" fill="none"/></svg>
<span class="t" style="left:71.50px;top:371.44px;font-size:8.0px;line-height:12px;color:#1e1e1e;letter-spacing:-0.279px;">employee</span>
<svg style="left:47.5px;top:385.98px;" width="2.7" height="4.6" viewBox="0 0 2.7 4.6"><polygon points="0,0 2.7,2.3 0,4.6" fill="#858585"/></svg>
<svg style="left:57.3px;top:384.28000000000003px;" width="9" height="8" viewBox="0 0 9 8"><rect x="0.4" y="0.4" width="8.2" height="7.2" fill="#fff" stroke="#333" stroke-width="0.8"/><rect x="0.4" y="0.4" width="8.2" height="1.7" fill="#333"/><path d="M0.5 4 H8.5 M0.5 5.8 H8.5 M3.2 2 V7.5 M5.8 2 V7.5" stroke="#4a4a4a" stroke-width="0.65" fill="none"/></svg>
<span class="t" style="left:71.50px;top:383.28px;font-size:8.0px;line-height:12px;color:#1e1e1e;letter-spacing:-0.270px;">employeeaddress</span>
<svg style="left:19px;top:122.6px;" width="6" height="10" viewBox="0 0 6 10"><rect x="0.8" y="0" width="1" height="2.8" fill="#2e9a2e"/><rect x="3.2" y="0" width="1" height="2.8" fill="#2e9a2e"/><path d="M0 2.6 H5 V4.8 L3.6 6.4 H1.4 L0 4.8 Z" fill="#2e9a2e"/><rect x="2" y="6" width="1" height="3.6" fill="#2e9a2e"/></svg>
<svg style="left:30.5px;top:135.2px;" width="9" height="9.5" viewBox="0 0 9 9.5"><path d="M0.3 1.8 a4 1.7 0 0 1 8 0 V7.4 a4 1.7 0 0 1 -8 0 Z" fill="#1e1e1e"/><ellipse cx="4.3" cy="1.9" rx="3.2" ry="1" fill="#fff"/></svg>
<svg style="left:43.5px;top:147.4px;" width="10" height="8" viewBox="0 0 10 8"><path d="M0.4 0.8 H3.8 L4.6 1.7 H9 V7 H0.4 Z" fill="#e2b872"/><path d="M1.8 2.9 H9.6 L8.7 7 H0.4 Z" fill="#f7e3b8"/></svg>
</div></div>
<div style="left:2.5px;top:402px;width:204.2px;height:1px;background:#cfd1dc;"></div>
<span class="t" style="left:18.70px;top:413.70px;font-size:7.8px;line-height:12px;color:#1e1e1e;letter-spacing:-0.019px;">Output</span>
<span class="t" style="left:60.00px;top:413.70px;font-size:7.8px;line-height:12px;color:#1e1e1e;letter-spacing:-0.164px;">Error List</span>
<div style="left:4px;top:428.5px;width:40px;height:2px;background:#dcdce4;"></div>
<div style="left:46px;top:428.5px;width:46px;height:2px;background:#dcdce4;"></div>
<div style="left:0px;top:431px;width:696px;height:20px;background:#007acc;"></div>
<div style="left:0px;top:431px;width:1px;height:20px;background:#9cc4ea;"></div>
<div style="left:0px;top:450px;width:696px;height:1px;background:#8fa6d0;"></div>
<svg style="left:688px;top:443px;" width="6" height="6" viewBox="0 0 6 6"><path d="M5.5 0.5 L0.5 5.5 M5.5 3 L3 5.5" stroke="#6db5e8" stroke-width="0.8"/></svg>
<span class="t" style="left:230.50px;top:88.90px;font-size:7.8px;line-height:12px;color:#1e1e1e;letter-spacing:-0.136px;">Start Page</span>
<div style="left:286.8px;top:86px;width:72.2px;height:16px;background:#737373;"></div>
<span class="t" style="left:308.00px;top:88.90px;font-size:7.8px;line-height:12px;color:#e8e8e8;letter-spacing:-0.098px;">SQL.sql*</span>
<svg style="left:345.5px;top:91.5px;" width="5.5" height="5.5" viewBox="0 0 5.5 5.5"><path d="M0.4 0.4 L5.1 5.1 M5.1 0.4 L0.4 5.1" stroke="#d0d0d0" stroke-width="1.1" fill="none"/></svg>
<div style="left:209px;top:102px;width:485px;height:2px;background:#757575;"></div>
<svg style="left:684.2px;top:92.39999999999999px;" width="5.6" height="3.3" viewBox="0 0 5.6 3.3"><polygon points="0,0 5.6,0 2.8,2.8" fill="#1e1e1e"/></svg>
<div style="left:209px;top:104px;width:485px;height:298.5px;background:#f0f0f4;"></div>
<div style="left:209px;top:104px;width:1px;height:298.5px;background:#d3d5e0;"></div>
<div style="left:693px;top:104px;width:1px;height:298.5px;background:#d3d5e0;"></div>
<div style="left:209px;top:402px;width:485px;height:1px;background:#c9cde0;"></div>
<div style="left:210px;top:105px;width:240px;height:13.5px;background:#fff;box-sizing:border-box;border:1px solid #d3d5e0;"></div>
<div style="left:453px;top:105px;width:240px;height:13.5px;background:#fff;box-sizing:border-box;border:1px solid #d3d5e0;"></div>
<svg style="left:441.6px;top:110.6px;" width="4.8" height="2.9" viewBox="0 0 4.8 2.9"><polygon points="0,0 4.8,0 2.4,2.4" fill="#3a3a3a"/></svg>
<svg style="left:685.1px;top:110.6px;" width="4.8" height="2.9" viewBox="0 0 4.8 2.9"><polygon points="0,0 4.8,0 2.4,2.4" fill="#3a3a3a"/></svg>
<div style="left:210px;top:119px;width:471.5px;height:64.5px;background:#fff;"></div>
<div style="left:210px;top:119px;width:14px;height:64.5px;background:#ebebef;"></div>
<div style="left:224px;top:120px;width:3px;height:11px;background:#ffff00;"></div>
<div style="left:235.4px;top:120.2px;width:446px;height:11.4px;background:#e6e6fa;box-sizing:border-box;border:1px solid #dedef4;"></div>
<div style="left:681.5px;top:119px;width:11.5px;height:64.5px;background:#e8e8ec;"></div>
<svg style="left:684.5px;top:176.5px;" width="6" height="3.5" viewBox="0 0 6 3.5"><polygon points="0,0 6,0 3,3.5" fill="#8a8a8a"/></svg>
<div style="left:681.5px;top:119px;width:11.5px;height:12.5px;background:#f0f0f4;"></div>
<svg style="left:683.6px;top:122px;" width="7" height="8" viewBox="0 0 7 8"><rect x="0" y="3.3" width="7" height="1.2" fill="#333"/><polygon points="3.5,0.9 4.9,2.4 2.1,2.4" fill="#333"/><polygon points="3.5,6.9 4.9,5.4 2.1,5.4" fill="#333"/></svg>
<svg style="left:684.3px;top:135.3px;" width="6" height="3.5" viewBox="0 0 6 3.5"><polygon points="0,3.5 6,3.5 3,0" fill="#a8a8a8"/></svg>
<span class="t" style="left:236px;top:121.3px;font-size:8.5px;line-height:12px;font-family:'Liberation Mono',monospace;letter-spacing:-0.241px;color:#000"><span style="color:#0000ff">SELECT</span> <span style="color:#808080">*</span> <span style="color:#0000ff">FROM</span><span style="color:#000"> customer </span><span style="color:#0000ff">WHERE</span> <span style="color:#ff00ff">LOWER</span><span style="color:#000">(last_name) </span><span style="color:#0000ff">LIKE</span> <span style="color:#e00000">'%jo%'</span><span style="color:#000">;</span></span>
<div style="left:210.5px;top:183.5px;width:12.5px;height:12px;background:#f2f2f6;"></div>
<div style="left:223px;top:183.5px;width:458.5px;height:12px;background:#e2e2e4;"></div>
<svg style="left:213px;top:186px;" width="8" height="7" viewBox="0 0 8 7"><rect x="3.4" y="0" width="1" height="7" fill="#222"/><polygon points="0.6,3.5 2.4,1.9 2.4,5.1" fill="#222"/><polygon points="7.2,3.5 5.4,1.9 5.4,5.1" fill="#222"/></svg>
<svg style="left:227.5px;top:186.5px;" width="3.5" height="6" viewBox="0 0 3.5 6"><polygon points="3.5,0 3.5,6 0,3" fill="#8a8a8a"/></svg>
<svg style="left:673.5px;top:186.5px;" width="3.5" height="6" viewBox="0 0 3.5 6"><polygon points="0,0 0,6 3.5,3" fill="#8a8a8a"/></svg>
<div style="left:210.5px;top:195.5px;width:483px;height:7.5px;background:#eeeef2;"></div>
<div style="left:446px;top:198.5px;width:1px;height:1px;background:#a8a8b4;"></div>
<div style="left:447px;top:200px;width:1px;height:1px;background:#a8a8b4;"></div>
<div style="left:448px;top:198.5px;width:1px;height:1px;background:#a8a8b4;"></div>
<div style="left:449px;top:200px;width:1px;height:1px;background:#a8a8b4;"></div>
<div style="left:450px;top:198.5px;width:1px;height:1px;background:#a8a8b4;"></div>
<div style="left:451px;top:200px;width:1px;height:1px;background:#a8a8b4;"></div>
<div style="left:452px;top:198.5px;width:1px;height:1px;background:#a8a8b4;"></div>
<div style="left:453px;top:200px;width:1px;height:1px;background:#a8a8b4;"></div>
<div style="left:454px;top:198.5px;width:1px;height:1px;background:#a8a8b4;"></div>
<div style="left:455px;top:200px;width:1px;height:1px;background:#a8a8b4;"></div>
<div style="left:210.5px;top:203px;width:483px;height:0.8px;background:#c9cde0;"></div>
<div style="left:210.5px;top:203.8px;width:482.5px;height:19.7px;background:#f0f0f2;"></div>
<div style="left:250px;top:207px;width:1px;height:14px;background:#cfd0da;"></div>
<div style="left:309px;top:207px;width:1px;height:14px;background:#cfd0da;"></div>
<div style="left:369.5px;top:207.2px;width:43.5px;height:13.4px;background:#f4f4f7;box-sizing:border-box;border:1px solid #d6d8e3;"></div>
<span class="t" style="left:373.30px;top:208.90px;font-size:8.0px;line-height:12px;color:#a0a0a0;letter-spacing:-0.599px;">1000</span>
<svg style="left:405.0px;top:212.5px;" width="4.4" height="2.7" viewBox="0 0 4.4 2.7"><polygon points="0,0 4.4,0 2.2,2.2" fill="#9a9a9a"/></svg>
<div style="left:457px;top:205px;width:18.5px;height:16.5px;background:#f2f6fb;box-sizing:border-box;border:1px solid #4a97dc;"></div>
<div style="left:494.5px;top:207px;width:1px;height:14px;background:#cfd0da;"></div>
<svg style="left:686.0px;top:213px;" width="5" height="6" viewBox="0 0 5 6"><rect x="0" y="0" width="5" height="1" fill="#666"/><rect x="0" y="2" width="5" height="1" fill="#666"/><polygon points="0,3.5 5,3.5 2.5,6" fill="#666"/></svg>
<svg style="left:216.4px;top:209.2px;" width="9" height="10" viewBox="0 0 9 10"><g transform="translate(0 0) scale(1.08)"><path d="M6.6 2.9 A3.4 3.4 0 1 0 7.4 5.6" fill="none" stroke="#1560b0" stroke-width="1.35"/><polygon points="4.3,0 8,2.2 4.6,4.3" fill="#1560b0"/></g></svg>
<svg style="left:233.5px;top:209.8px;" width="10" height="9" viewBox="0 0 10 9"><path d="M0.4 0.4 L9.6 8.8 M9.6 0.4 L0.4 8.8" stroke="#a0a0a0" stroke-width="1.7" fill="none"/></svg>
<svg style="left:256px;top:209.2px;" width="10" height="9" viewBox="0 0 10 9"><path d="M0.6 8.8 V4.2 H9.8 V8.8 Z" fill="#b4b4b4"/><path d="M3.6 5.6 V8.8 M6.6 5.6 V8.8 M0.8 6.9 H9.4" stroke="#e4e4e4" stroke-width="0.6"/><path d="M1.6 0.2 L5 3.6" stroke="#b0b0b0" stroke-width="1.5"/></svg>
<svg style="left:275px;top:209.6px;" width="10" height="9" viewBox="0 0 10 9"><path d="M0.6 4.8 L3.4 8.2 L9.2 0.4" stroke="#acacac" stroke-width="1.9" fill="none"/></svg>
<svg style="left:292.3px;top:209.8px;" width="10" height="9" viewBox="0 0 10 9"><path d="M0.4 0.4 L9.6 8.8 M9.6 0.4 L0.4 8.8" stroke="#acacac" stroke-width="1.7" fill="none"/></svg>
<svg style="left:316.5px;top:208.8px;" width="10" height="10" viewBox="0 0 10 10"><rect x="1.5" y="0.1" width="1.9" height="1.7" fill="#222"/><rect x="4.5" y="0.1" width="1.9" height="1.7" fill="#222"/><rect x="7.5" y="0.1" width="1.9" height="1.7" fill="#222"/><rect x="1.5" y="2.6" width="1.9" height="1.7" fill="#222"/><rect x="4.5" y="2.6" width="1.9" height="1.7" fill="#222"/><rect x="7.5" y="2.6" width="1.9" height="1.7" fill="#222"/><rect x="1.5" y="5.1" width="1.9" height="1.7" fill="#222"/><rect x="4.5" y="5.1" width="1.9" height="1.7" fill="#222"/><rect x="7.5" y="5.1" width="1.9" height="1.7" fill="#222"/><path d="M0.6 8.5 H5.6" stroke="#222" stroke-width="0.8"/><polygon points="0,8.5 1.8,7.1 1.8,9.9" fill="#222"/><polygon points="6.2,8.5 4.4,7.1 4.4,9.9" fill="#222"/><rect x="7.5" y="7.6" width="1.9" height="1.6" fill="#222"/></svg>
<svg style="left:336px;top:210.6px;" width="7" height="6.4" viewBox="0 0 7 6.4"><polygon points="3.6,0 3.6,6.4 0,3.2" fill="#b4b4b4"/><rect x="4.4" y="0" width="2.4" height="6.4" fill="#b4b4b4"/></svg>
<svg style="left:355px;top:210.6px;" width="4" height="6.4" viewBox="0 0 4 6.4"><polygon points="3.8,0 3.8,6.4 0,3.2" fill="#b4b4b4"/></svg>
<svg style="left:423px;top:210.6px;" width="4" height="6.4" viewBox="0 0 4 6.4"><polygon points="0,0 0,6.4 3.8,3.2" fill="#b4b4b4"/></svg>
<svg style="left:440px;top:210.6px;" width="7.5" height="6.4" viewBox="0 0 7.5 6.4"><rect x="0" y="0" width="2.4" height="6.4" fill="#b4b4b4"/><polygon points="3.4,0 3.4,6.4 7.2,3.2" fill="#b4b4b4"/></svg>
<svg style="left:461px;top:209px;" width="10" height="8.5" viewBox="0 0 10 8.5"><rect x="0.5" y="0.5" width="9" height="7.5" fill="#fff" stroke="#333" stroke-width="1"/><path d="M3.5333333333333337 0 V8.5 M6.466666666666667 0 V8.5 M0 3.0333333333333337 H10 M0 5.466666666666667 H10" stroke="#333" stroke-width="0.8"/></svg>
<svg style="left:479px;top:208.8px;" width="11" height="10" viewBox="0 0 11 10"><rect x="0.6" y="0.6" width="9.6" height="8.6" fill="#c8c8c8" stroke="#555" stroke-width="1.1"/><rect x="2" y="2" width="2.8" height="2.4" fill="#333"/><rect x="6" y="2" width="2.8" height="2.4" fill="#333"/><rect x="2" y="5.6" width="2.8" height="2.4" fill="#333"/><rect x="6" y="5.6" width="2.8" height="2.4" fill="#333"/></svg>
<svg style="left:503px;top:209px;" width="10" height="10" viewBox="0 0 10 10"><rect x="0.5" y="0.5" width="8.8" height="8.6" fill="#fafafa" stroke="#444" stroke-width="0.8"/><rect x="0.5" y="0.5" width="8.8" height="1.6" fill="#444"/><path d="M3.5 2 V9 M6.4 2 V9" stroke="#444" stroke-width="0.8"/></svg>
<svg style="left:520px;top:208.8px;" width="11" height="10" viewBox="0 0 11 10"><circle cx="6.6" cy="2.6" r="2.1" fill="none" stroke="#777" stroke-width="0.9"/><path d="M8.2 4.2 L10 6.2" stroke="#777" stroke-width="1.1"/><path d="M2.4 4.4 V8" stroke="#1767c0" stroke-width="1.3"/><polygon points="0,6.8 4.8,6.8 2.4,9.8" fill="#1767c0"/></svg>
<svg style="left:538.5px;top:208.4px;" width="11" height="10" viewBox="0 0 11 10"><rect x="2.6" y="2.9" width="8" height="6.2" fill="#555"/><path d="M3.6 5.4 H9.8 M3.6 7.2 H9.8" stroke="#aaa" stroke-width="0.6"/><path d="M3.4 3.6 A1.9 1.9 0 1 1 3.6 1" fill="none" stroke="#1767c0" stroke-width="1.1"/><polygon points="2.6,-0.6 5,1 2.8,2.4" fill="#1767c0"/></svg>
<div style="left:210.5px;top:223.5px;width:482.5px;height:148px;background:#fff;"></div>
<div style="left:210.5px;top:223.5px;width:482.5px;height:22px;background:#fbfbfc;"></div>
<div style="left:210.5px;top:223.5px;width:482.5px;height:0.8px;background:#e0e0ea;"></div>
<div style="left:224px;top:245.5px;width:469px;height:14.6px;background:#ebebf0;"></div>
<div style="left:224px;top:245.5px;width:83px;height:14.6px;background:#c5d9f3;"></div>
<div style="left:210.5px;top:245.5px;width:482.5px;height:0.9px;background:#e0e0ea;"></div>
<div style="left:223.5px;top:260.12px;width:469.5px;height:0.9px;background:#e0e0ea;"></div>
<div style="left:223.5px;top:274.74px;width:469.5px;height:0.9px;background:#e0e0ea;"></div>
<div style="left:223.5px;top:289.36px;width:469.5px;height:0.9px;background:#e0e0ea;"></div>
<div style="left:223.5px;top:303.98px;width:469.5px;height:0.9px;background:#e0e0ea;"></div>
<div style="left:223.5px;top:318.6px;width:469.5px;height:0.9px;background:#e0e0ea;"></div>
<div style="left:223.5px;top:333.22px;width:469.5px;height:0.9px;background:#e0e0ea;"></div>
<div style="left:223px;top:223.5px;width:0.9px;height:109.72000000000003px;background:#e0e0ea;"></div>
<div style="left:307px;top:223.5px;width:0.9px;height:109.72000000000003px;background:#e0e0ea;"></div>
<div style="left:385.4px;top:223.5px;width:0.9px;height:109.72000000000003px;background:#e0e0ea;"></div>
<div style="left:443.6px;top:223.5px;width:0.9px;height:109.72000000000003px;background:#e0e0ea;"></div>
<div style="left:501.2px;top:223.5px;width:0.9px;height:109.72000000000003px;background:#e0e0ea;"></div>
<div style="left:692px;top:223.5px;width:0.9px;height:109.72000000000003px;background:#e0e0ea;"></div>
<div style="left:210.5px;top:245.5px;width:13px;height:87.72000000000003px;background:#f8f8fa;"></div>
<svg style="left:216.2px;top:251.2px;" width="2.6" height="4.6" viewBox="0 0 2.6 4.6"><polygon points="0,0 2.6,2.3 0,4.6" fill="#555"/></svg>
<span class="t" style="left:226.00px;top:225.40px;font-size:8.0px;line-height:12px;color:#1e1e1e;letter-spacing:-0.325px;">customer_id</span>
<span class="t" style="left:226.50px;top:233.70px;font-size:7.2px;line-height:12px;color:#a2a2a2;letter-spacing:-0.307px;">UNSIGNED SMALLINT</span>
<span class="t" style="left:310.00px;top:225.40px;font-size:8.0px;line-height:12px;color:#1e1e1e;letter-spacing:-0.058px;">store_id</span>
<span class="t" style="left:310.50px;top:233.70px;font-size:7.2px;line-height:12px;color:#a2a2a2;letter-spacing:-0.180px;">UNSIGNED TINYINT</span>
<span class="t" style="left:389.00px;top:225.40px;font-size:8.0px;line-height:12px;color:#1e1e1e;letter-spacing:-0.235px;">first_name</span>
<span class="t" style="left:389.00px;top:233.70px;font-size:7.2px;line-height:12px;color:#a2a2a2;letter-spacing:-0.225px;">VARCHAR(45)</span>
<span class="t" style="left:447.00px;top:225.40px;font-size:8.0px;line-height:12px;color:#1e1e1e;letter-spacing:-0.379px;">last_name</span>
<span class="t" style="left:447.00px;top:233.70px;font-size:7.2px;line-height:12px;color:#a2a2a2;letter-spacing:-0.270px;">VARCHAR(45)</span>
<span class="t" style="left:504.50px;top:225.40px;font-size:8.0px;line-height:12px;color:#1e1e1e;letter-spacing:-0.223px;">email</span>
<span class="t" style="left:504.50px;top:233.70px;font-size:7.2px;line-height:12px;color:#a2a2a2;letter-spacing:-0.180px;">VARCHAR(50)</span>
<span class="t" style="left:300.27px;top:248.00px;font-size:8.0px;line-height:12px;color:#1e1e1e;letter-spacing:-0.222px;">2</span>
<span class="t" style="left:378.77px;top:248.00px;font-size:8.0px;line-height:12px;color:#1e1e1e;letter-spacing:-0.222px;">1</span>
<span class="t" style="left:389.30px;top:248.00px;font-size:8.0px;line-height:12px;color:#1e1e1e;letter-spacing:-0.426px;">PATRICIA</span>
<span class="t" style="left:447.00px;top:248.00px;font-size:8.0px;line-height:12px;color:#1e1e1e;letter-spacing:-0.873px;">JOHNSON</span>
<span class="t" style="left:504.50px;top:248.00px;font-size:8.0px;line-height:12px;color:#1e1e1e;letter-spacing:-0.442px;">PATRICIA.JOHNSON@newexample.com</span>
<span class="t" style="left:300.27px;top:262.62px;font-size:8.0px;line-height:12px;color:#1e1e1e;letter-spacing:-0.222px;">4</span>
<span class="t" style="left:378.77px;top:262.62px;font-size:8.0px;line-height:12px;color:#1e1e1e;letter-spacing:-0.222px;">2</span>
<span class="t" style="left:389.30px;top:262.62px;font-size:8.0px;line-height:12px;color:#1e1e1e;letter-spacing:-0.948px;">BARBARA</span>
<span class="t" style="left:447.00px;top:262.62px;font-size:8.0px;line-height:12px;color:#1e1e1e;letter-spacing:-1.074px;">JONES</span>
<span class="t" style="left:504.50px;top:262.62px;font-size:8.0px;line-height:12px;color:#1e1e1e;letter-spacing:-0.546px;">BARBARA.JONES@newexample.com</span>
<span class="t" style="left:292.38px;top:277.24px;font-size:8.0px;line-height:12px;color:#1e1e1e;letter-spacing:-0.213px;">110</span>
<span class="t" style="left:378.77px;top:277.24px;font-size:8.0px;line-height:12px;color:#1e1e1e;letter-spacing:-0.222px;">2</span>
<span class="t" style="left:389.30px;top:277.24px;font-size:8.0px;line-height:12px;color:#1e1e1e;letter-spacing:-0.599px;">TIFFANY</span>
<span class="t" style="left:447.00px;top:277.24px;font-size:8.0px;line-height:12px;color:#1e1e1e;letter-spacing:-0.732px;">JORDAN</span>
<span class="t" style="left:504.50px;top:277.24px;font-size:8.0px;line-height:12px;color:#1e1e1e;letter-spacing:-0.436px;">TIFFANY.JORDAN@newexample.com</span>
<span class="t" style="left:291.82px;top:291.86px;font-size:8.0px;line-height:12px;color:#1e1e1e;letter-spacing:-0.222px;">214</span>
<span class="t" style="left:378.77px;top:291.86px;font-size:8.0px;line-height:12px;color:#1e1e1e;letter-spacing:-0.222px;">1</span>
<span class="t" style="left:389.30px;top:291.86px;font-size:8.0px;line-height:12px;color:#1e1e1e;letter-spacing:-0.608px;">KRISTIN</span>
<span class="t" style="left:447.00px;top:291.86px;font-size:8.0px;line-height:12px;color:#1e1e1e;letter-spacing:-0.894px;">JOHNSTON</span>
<span class="t" style="left:504.50px;top:291.86px;font-size:8.0px;line-height:12px;color:#1e1e1e;letter-spacing:-0.510px;">KRISTIN.JOHNSTON@newexample.com</span>
<span class="t" style="left:291.82px;top:306.48px;font-size:8.0px;line-height:12px;color:#1e1e1e;letter-spacing:-0.222px;">307</span>
<span class="t" style="left:378.77px;top:306.48px;font-size:8.0px;line-height:12px;color:#1e1e1e;letter-spacing:-0.222px;">2</span>
<span class="t" style="left:389.30px;top:306.48px;font-size:8.0px;line-height:12px;color:#1e1e1e;letter-spacing:-1.085px;">JOSEPH</span>
<span class="t" style="left:447.00px;top:306.48px;font-size:8.0px;line-height:12px;color:#1e1e1e;letter-spacing:-0.986px;">JOY</span>
<span class="t" style="left:504.50px;top:306.48px;font-size:8.0px;line-height:12px;color:#1e1e1e;letter-spacing:-0.538px;">JOSEPH.JOY@newexample.com</span>
<span class="t" style="left:291.82px;top:321.10px;font-size:8.0px;line-height:12px;color:#1e1e1e;letter-spacing:-0.222px;">337</span>
<span class="t" style="left:378.77px;top:321.10px;font-size:8.0px;line-height:12px;color:#1e1e1e;letter-spacing:-0.222px;">1</span>
<span class="t" style="left:389.30px;top:321.10px;font-size:8.0px;line-height:12px;color:#1e1e1e;letter-spacing:-0.916px;">JERRY</span>
<span class="t" style="left:447.00px;top:321.10px;font-size:8.0px;line-height:12px;color:#1e1e1e;letter-spacing:-0.830px;">JORDON</span>
<span class="t" style="left:504.50px;top:321.10px;font-size:8.0px;line-height:12px;color:#1e1e1e;letter-spacing:-0.501px;">JERRY.JORDON@newexample.com</span>
<div style="left:210.5px;top:371.5px;width:132px;height:11.5px;background:#f7f7f9;"></div>
<span class="t" style="left:234.50px;top:370.90px;font-size:7.8px;line-height:12px;color:#1e1e1e;letter-spacing:-0.102px;">Record 1 of 6</span>
<div style="left:342.5px;top:371.3px;width:350.5px;height:11.4px;background:#e4e4e6;"></div>
<div style="left:353.5px;top:374.3px;width:91.5px;height:5.2px;background:#b0b0b0;"></div>
<svg style="left:345.5px;top:374px;" width="3.5" height="6" viewBox="0 0 3.5 6"><polygon points="3.5,0 3.5,6 0,3" fill="#8a8a8a"/></svg>
<svg style="left:684.5px;top:374px;" width="3.5" height="6" viewBox="0 0 3.5 6"><polygon points="0,0 0,6 3.5,3" fill="#8a8a8a"/></svg>
<svg style="left:212px;top:374px;" width="7" height="5.6" viewBox="0 0 7 5.6"><rect x="0" y="0" width="1" height="5.6" fill="#b8b8b8"/><polygon points="3.8,0 3.8,5.6 1.2,2.8" fill="#b8b8b8"/><polygon points="6.6,0 6.6,5.6 4,2.8" fill="#b8b8b8"/></svg>
<svg style="left:224px;top:374px;" width="3" height="5.6" viewBox="0 0 3 5.6"><polygon points="3,0 3,5.6 0,2.8" fill="#999"/></svg>
<svg style="left:287px;top:374px;" width="3" height="5.6" viewBox="0 0 3 5.6"><polygon points="0,0 0,5.6 3,2.8" fill="#959595"/></svg>
<svg style="left:295px;top:374px;" width="7" height="5.6" viewBox="0 0 7 5.6"><polygon points="0,0 0,5.6 2.6,2.8" fill="#959595"/><polygon points="2.8,0 2.8,5.6 5.4,2.8" fill="#959595"/><rect x="5.6" y="0" width="1" height="5.6" fill="#959595"/></svg>
<svg style="left:305px;top:374.2px;" width="5.5" height="5.5" viewBox="0 0 5.5 5.5"><path d="M2.75 0 V5.5 M0 2.75 H5.5" stroke="#b8b8b8" stroke-width="0.9"/></svg>
<svg style="left:314.5px;top:374.2px;" width="5" height="5.5" viewBox="0 0 5 5.5"><path d="M0 2.75 H5" stroke="#b8b8b8" stroke-width="0.9"/></svg>
<svg style="left:324.5px;top:374px;" width="6" height="6" viewBox="0 0 6 6"><path d="M0.3 3.4 L2 5.4 L5.6 0.4" stroke="#b8b8b8" stroke-width="1" fill="none"/></svg>
<svg style="left:334.3px;top:374.2px;" width="5.6" height="5.4" viewBox="0 0 5.6 5.4"><path d="M0.3 0.3 L5.3 5.1 M5.3 0.3 L0.3 5.1" stroke="#a0a0a0" stroke-width="1" fill="none"/></svg>
<svg style="left:7px;top:414.8px;" width="10" height="9" viewBox="0 0 10 9"><path d="M3.4 0.6 H0.6 V8 H3.4" fill="none" stroke="#333" stroke-width="1"/><path d="M2.6 4.3 H8" stroke="#333" stroke-width="1"/><polygon points="6.4,2 9.2,4.3 6.4,6.6" fill="#333"/></svg>
<svg style="left:49px;top:414.2px;" width="10" height="10.4" viewBox="0 0 10 10.4"><rect x="1" y="2" width="6.4" height="7.6" fill="#fafafa" stroke="#444" stroke-width="0.9"/><rect x="2.8" y="0.6" width="2.8" height="2" fill="#444"/><circle cx="7" cy="7.6" r="2.4" fill="#e03a2b"/><circle cx="7" cy="7.6" r="0.9" fill="#fff"/></svg>
<svg style="left:219px;top:90.2px;" width="8" height="8" viewBox="0 0 8 8"><circle cx="3.8" cy="4.2" r="3.2" fill="none" stroke="#3a3a3a" stroke-width="1.2"/><path d="M3.8 2.4 V4.4 H2.4" stroke="#3a3a3a" stroke-width="0.9" fill="none"/><path d="M5.8 0.9 L7.7 0.5 L7.5 2.4" stroke="#3a3a3a" stroke-width="0.9" fill="none"/></svg>
<svg style="left:295px;top:89.6px;" width="10.5" height="9.6" viewBox="0 0 10.5 9.6"><path d="M3.4 0.6 H9.6 V2.4 H8 V8.8 H0.8 V7 H2.6 V1.4 a0.8 0.8 0 0 1 0.8 -0.8 Z" fill="none" stroke="#fff" stroke-width="1.1"/></svg>
<div style="left:210.5px;top:383px;width:482.5px;height:19px;background:#eeeef2;"></div>
<span class="t" style="left:229.00px;top:387.20px;font-size:8.2px;line-height:12px;color:#1e1e1e;letter-spacing:-0.010px;">Text</span>
<div style="left:252.5px;top:386px;width:1px;height:13px;background:#cfd0da;"></div>
<div style="left:399.5px;top:386px;width:1px;height:13px;background:#cfd0da;"></div>
<div style="left:315.3px;top:386px;width:1px;height:13px;background:#dcdde6;"></div>
<div style="left:273px;top:384.2px;width:40px;height:16.3px;background:#edf2f9;box-sizing:border-box;border:1px solid #3f8dd8;"></div>
<span class="t" style="left:291.00px;top:387.20px;font-size:8.0px;line-height:12px;color:#1e1e1e;font-weight:bold;letter-spacing:0.165px;">Data</span>
<svg style="left:216px;top:387.6px;" width="10" height="9.4" viewBox="0 0 10 9.4"><path d="M3.2 0.6 H9.2 V2.2 H7.6 V8.6 H0.8 V7 H2.4 V1.4 a0.8 0.8 0 0 1 0.8 -0.8 Z" fill="#f4f4f4" stroke="#333" stroke-width="1"/></svg>
<svg style="left:260px;top:388.6px;" width="8.5" height="8" viewBox="0 0 8.5 8"><path d="M2.4 2 H8.4 M0 6 H6" stroke="#222" stroke-width="1"/><polygon points="0,2 2.8,0 2.8,4" fill="#222"/><polygon points="8.4,6 5.6,4 5.6,8" fill="#222"/></svg>
<svg style="left:278px;top:388px;" width="9.5" height="9.5" viewBox="0 0 9.5 9.5"><rect x="0.5" y="0.5" width="8.2" height="8.2" fill="#fafafa" stroke="#444" stroke-width="1"/><rect x="2.0" y="2.0" width="1.2" height="1.2" fill="#333"/><rect x="4.1" y="2.0" width="1.2" height="1.2" fill="#333"/><rect x="6.2" y="2.0" width="1.2" height="1.2" fill="#333"/><rect x="2.0" y="4.1" width="1.2" height="1.2" fill="#333"/><rect x="4.1" y="4.1" width="1.2" height="1.2" fill="#333"/><rect x="6.2" y="4.1" width="1.2" height="1.2" fill="#333"/><rect x="2.0" y="6.2" width="1.2" height="1.2" fill="#333"/><rect x="4.1" y="6.2" width="1.2" height="1.2" fill="#333"/><rect x="6.2" y="6.2" width="1.2" height="1.2" fill="#333"/></svg>
<svg style="left:323.5px;top:388.7px;" width="7.5" height="7.5" viewBox="0 0 7.5 7.5"><path d="M3.75 0 V7.5 M0 3.75 H7.5" stroke="#1e1e1e" stroke-width="1.4"/></svg>
<svg style="left:406px;top:387.2px;" width="10.5" height="10.5" viewBox="0 0 10.5 10.5"><circle cx="5.25" cy="5.25" r="5.1" fill="#2a9a3c"/><path d="M2.6 5.4 L4.5 7.4 L7.9 3.1" stroke="#fff" stroke-width="1.5" fill="none"/></svg>
<span class="t" style="left:420.50px;top:387.20px;font-size:8.0px;line-height:12px;color:#1e1e1e;letter-spacing:0.062px;">Query executed successfully.</span>
<div style="left:531.5px;top:386px;width:1px;height:13px;background:#cfd0da;"></div>
<div style="left:582.5px;top:386px;width:1px;height:13px;background:#cfd0da;"></div>
<div style="left:664.5px;top:386px;width:1px;height:13px;background:#cfd0da;"></div>
<span class="t" style="left:537.60px;top:387.20px;font-size:8.0px;line-height:12px;color:#1e1e1e;letter-spacing:-0.260px;">0:00:00.007</span>
<span class="t" style="left:588.00px;top:387.20px;font-size:8.0px;line-height:12px;color:#1e1e1e;letter-spacing:-0.102px;">JordanSanders (8.0)</span>
<span class="t" style="left:670.50px;top:387.20px;font-size:8.0px;line-height:12px;color:#1e1e1e;letter-spacing:0.500px;">tw</span>
<svg style="left:686.0px;top:391.5px;" width="5" height="6" viewBox="0 0 5 6"><rect x="0" y="0" width="5" height="1" fill="#666"/><rect x="0" y="2" width="5" height="1" fill="#666"/><polygon points="0,3.5 5,3.5 2.5,6" fill="#666"/></svg>
</div></body></html>
